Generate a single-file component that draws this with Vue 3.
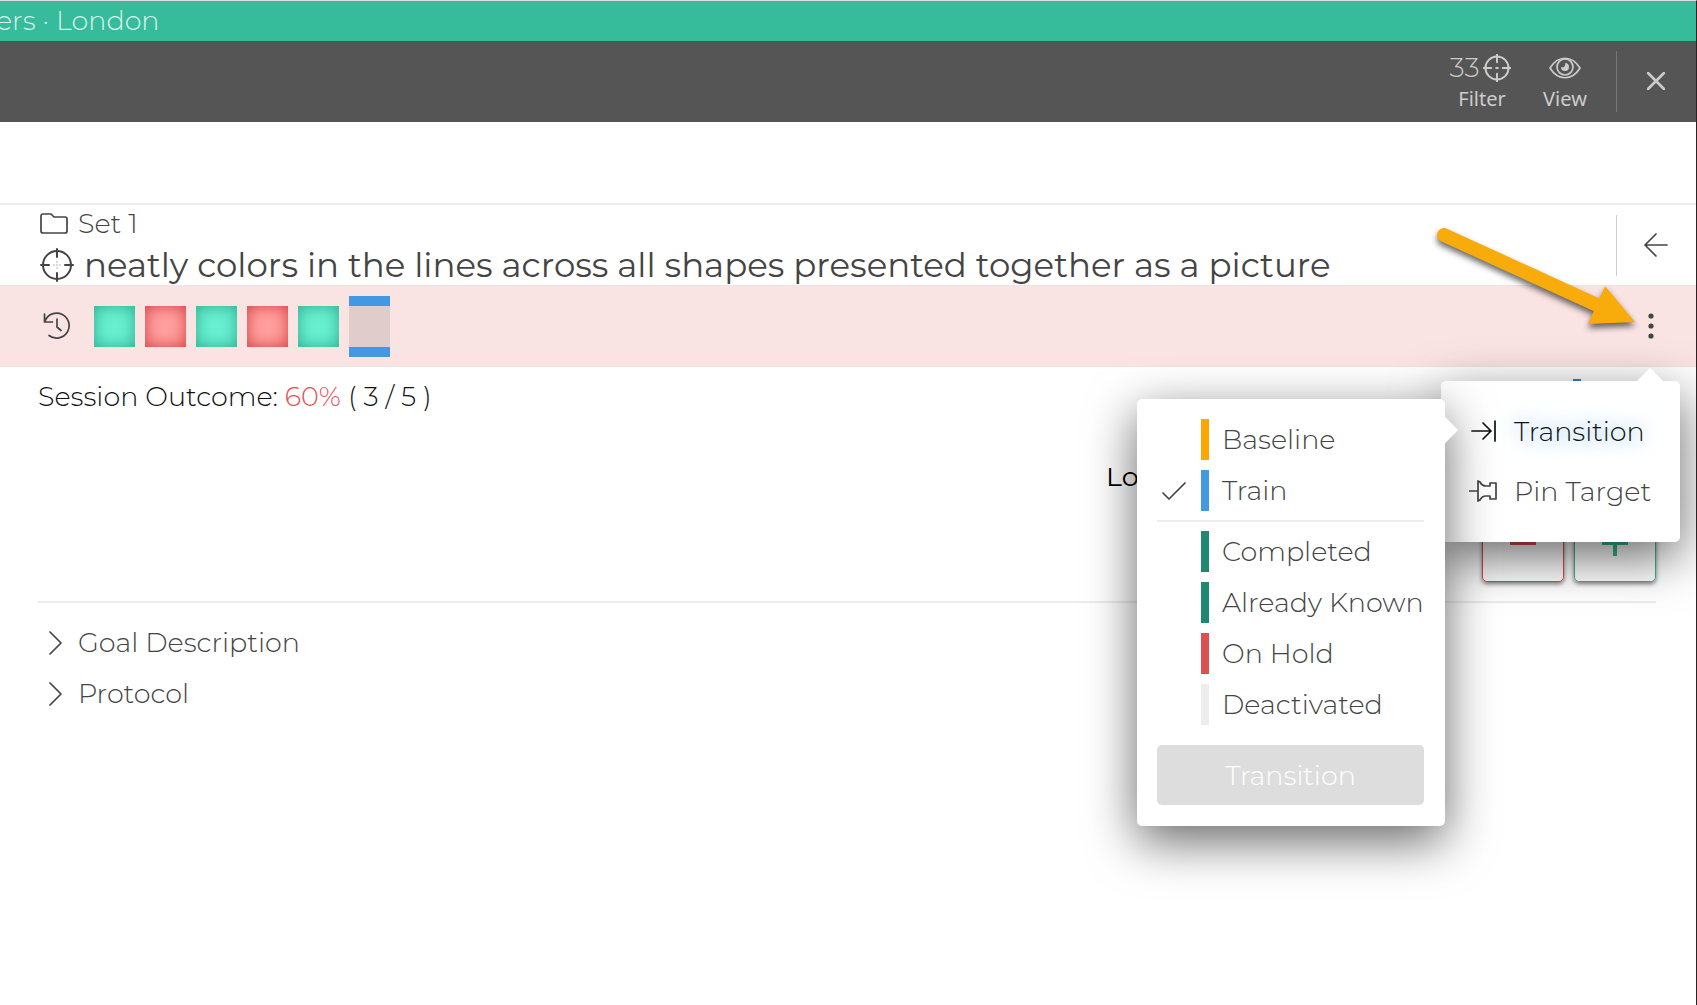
<template>
  <div class="page">
    <div class="location-bar"><span>ers · London</span></div>

    <header class="toolbar">
      <button class="tool filter">
        <span class="tool-top">
          33
          <svg class="target-small" viewBox="0 0 34 34">
            <circle cx="17" cy="17" r="14" />
            <path d="M17 1v9M17 24v9M1 17h9M24 17h9M16 17h2" />
          </svg>
        </span>
        <span class="tool-label">Filter</span>
      </button>
      <button class="tool view">
        <span class="tool-top">
          <svg class="eye" viewBox="0 0 32 22">
            <path d="M1 11C9-2 23-2 31 11C23 24 9 24 1 11Z" />
            <circle cx="16" cy="10" r="8" />
            <path class="solid" d="M16 6a4 4 0 1 1-4 4 3 3 0 0 0 4-4z" />
          </svg>
        </span>
        <span class="tool-label">View</span>
      </button>
      <div class="side-action">
        <button aria-label="Close">
          <svg class="close" viewBox="0 0 18 18"><path d="M1 1l16 16M17 1L1 17" /></svg>
        </button>
      </div>
    </header>

    <div class="spacer"></div>

    <section class="target-header">
      <div class="titles">
        <p class="set-name">
          <svg class="folder" viewBox="0 0 28 22">
            <path d="M3 1h8l3 3h11a2 2 0 0 1 2 2v12a2 2 0 0 1-2 2H3a2 2 0 0 1-2-2V3a2 2 0 0 1 2-2z" />
          </svg>
          Set 1
        </p>
        <h1>
          <svg class="target" viewBox="0 0 34 34">
            <circle cx="17" cy="17" r="14" />
            <path d="M17 1v8M17 25v8M1 17h8M25 17h8" />
            <path class="dots" d="M17 17h0M17 14h0M17 20h0M14 17h0M20 17h0" />
          </svg>
          neatly colors in the lines across all shapes presented together as a picture
        </h1>
      </div>
      <div class="side-action light">
        <button aria-label="Back">
          <svg class="back" viewBox="0 0 24 24"><path d="M23 12H1M12 1L1 12l11 11" /></svg>
        </button>
      </div>
    </section>

    <section class="history">
      <svg class="history-icon" viewBox="0 0 28 28">
        <path d="M2 9A12.500 12.500 0 1 1 6 23.500M1.500 2v8h8M14 7v8l4 3.500" />
      </svg>
      <ul class="trials">
        <li v-for="(trial, i) in trials" :key="i" :class="trial"></li>
      </ul>

      <div class="actions">
        <button class="kebab" aria-label="More actions">
          <svg viewBox="0 0 6 26">
            <circle cx="3" cy="3" r="2.600" />
            <circle cx="3" cy="13" r="2.600" />
            <circle cx="3" cy="23" r="2.600" />
          </svg>
        </button>

        <div class="popup menu">
          <button class="menu-item active">
            <svg viewBox="0 0 28 22"><path d="M3 11h19M14 3l8 8-8 8M26 1v20" /></svg>
            Transition
          </button>
          <button class="menu-item">
            <svg viewBox="0 0 28 22">
              <path d="M0 11h9M9 1v20l2-1q2-4 6-4h4v3h6V3h-6v3h-4q-4 0-6-4z" />
            </svg>
            Pin Target
          </button>

          <div class="popup submenu">
            <template v-for="(group, g) in phases" :key="g">
              <hr v-if="g > 0" />
              <button v-for="phase in group" :key="phase.name" class="phase" @click="selected = phase.name">
                <span class="check">
                  <svg v-if="selected === phase.name" viewBox="0 0 24 18"><path d="M1 11l6 6L23 1" /></svg>
                </span>
                <span class="phase-bar" :class="phase.color"></span>
                {{ phase.name }}
              </button>
            </template>
            <button class="submit" disabled>Transition</button>
          </div>
        </div>
      </div>
    </section>

    <main class="session">
      <div class="outcome">
        <p>Session Outcome: <span class="percent">60%</span> ( 3 / 5 )</p>
        <span class="marker"></span>
      </div>
      <div class="counter">
        <p class="counter-label">Lo</p>
        <div class="counter-buttons">
          <button class="minus" aria-label="Decrease">
            <svg viewBox="0 0 26 26"><path d="M0 13h26" /></svg>
          </button>
          <button class="plus" aria-label="Increase">
            <svg viewBox="0 0 26 26"><path d="M0 13h26M13 0v26" /></svg>
          </button>
        </div>
      </div>
      <hr />
      <button v-for="title in sections" :key="title" class="section-toggle">
        <svg viewBox="0 0 14 24"><path d="M1 1l11 11L1 23" /></svg>
        {{ title }}
      </button>
    </main>

    <svg class="pointer" viewBox="0 0 220 120" aria-hidden="true">
      <path class="shaft" d="M14 15L167 85" />
      <path class="head" d="M175 66L205 102L158 104z" />
    </svg>
  </div>
</template>

<script setup>
import { ref } from 'vue'

const selected = ref('Train')

const trials = ['correct', 'incorrect', 'correct', 'incorrect', 'correct', 'current']

const phases = [
  [
    { name: 'Baseline', color: 'orange' },
    { name: 'Train', color: 'blue' }
  ],
  [
    { name: 'Completed', color: 'green' },
    { name: 'Already Known', color: 'green' },
    { name: 'On Hold', color: 'red' },
    { name: 'Deactivated', color: 'gray' }
  ]
]

const sections = ['Goal Description', 'Protocol']
</script>

<style>
body {
  margin: 0;
}
</style>

<style scoped>
* {
  box-sizing: border-box;
}

.page {
  position: relative;
  min-height: 100vh;
  overflow: hidden;
  border-top: 1px solid #ddd;
  border-right: 1px solid #2b2024;
  background: white;
  color: #444;
  font-family: Montserrat, Inter, sans-serif;
  font-size: 27px;
  font-weight: 300;
}

p,
h1,
ul {
  margin: 0;
  padding: 0;
}

button {
  display: flex;
  align-items: center;
  padding: 0;
  border: none;
  background: none;
  color: inherit;
  font: inherit;
  cursor: pointer;
}

svg {
  flex: none;
  fill: none;
  stroke: currentColor;
  stroke-width: 1.7;
  stroke-linecap: round;
  stroke-linejoin: round;
}

hr {
  height: 2px;
  margin: 0;
  border: none;
  background: #ececec;
}

.location-bar {
  height: 40px;
  line-height: 40px;
  background: #36bb9b;
  color: #d7f1eb;
}

.location-bar span {
  margin-left: -4px;
}

.toolbar {
  display: flex;
  justify-content: flex-end;
  align-items: center;
  height: 81px;
  background: #555;
  color: #ccc;
}

.tool {
  flex-direction: column;
  width: 64px;
  margin-right: 19px;
}

.tool-top {
  display: flex;
  align-items: center;
  gap: 3px;
  height: 34px;
}

.filter .tool-top {
  margin-right: 4px;
}

.tool-label {
  font-family: "Noto Sans", sans-serif;
  font-size: 20px;
  font-weight: 400;
  line-height: 28px;
}

.target-small {
  width: 28px;
  height: 28px;
  stroke-width: 2.4;
}

.eye {
  width: 32px;
  height: 22px;
}

.eye .solid {
  fill: currentColor;
  stroke: none;
}

.side-action {
  display: flex;
  align-items: center;
  justify-content: center;
  flex: none;
  width: 80px;
  height: 61px;
  padding-right: 1px;
  padding-bottom: 1px;
  border-left: 1px solid #777;
}

.side-action.light {
  border-color: #ccc;
}

.close {
  width: 18px;
  height: 18px;
  stroke-width: 2.6;
}

.spacer {
  height: 83px;
  border-bottom: 2px solid #ececec;
}

.target-header {
  display: flex;
  align-items: center;
  height: 80px;
}

.titles {
  flex: 1;
  min-width: 0;
  padding-top: 3px;
  padding-left: 40px;
  white-space: nowrap;
}

.set-name {
  display: flex;
  align-items: center;
  gap: 10px;
  line-height: 36px;
}

.folder {
  width: 28px;
  height: 22px;
}

.target {
  width: 34px;
  height: 34px;
  stroke-width: 2;
}

.target .dots {
  stroke-width: 1;
}

h1 {
  display: flex;
  align-items: center;
  gap: 10px;
  font-size: 34px;
  font-weight: 400;
  line-height: 46px;
}

.back {
  width: 24px;
  height: 24px;
}

.history {
  display: flex;
  align-items: center;
  height: 82px;
  padding-left: 43px;
  border-top: 1px solid #ebe6e6;
  border-bottom: 1px solid #ebe6e6;
  background: #f9e3e3;
}

.history-icon {
  width: 28px;
  height: 28px;
}

.trials {
  display: flex;
  align-items: center;
  gap: 10px;
  margin-left: 23px;
  list-style: none;
}

.trials li {
  width: 41px;
  height: 41px;
}

.correct {
  background: #68f0d0;
  box-shadow: inset 0 0 16px #2caa8c;
}

.incorrect {
  background: #ffa09f;
  box-shadow: inset 0 0 16px #d23c3c;
}

.trials .current {
  height: 61px;
  border: solid #4299e1;
  border-width: 10px 0;
  background: #dfcccb;
}

.actions {
  position: relative;
  z-index: 2;
  margin-left: auto;
}

.kebab {
  justify-content: center;
  width: 90px;
  height: 60px;
}

.kebab svg {
  width: 6px;
  height: 26px;
  fill: currentColor;
  stroke: none;
}

.popup {
  position: absolute;
  border-radius: 5px;
  background: white;
  box-shadow: 0 15px 50px rgba(0, 0, 0, 0.6);
}

.popup::before {
  content: "";
  position: absolute;
  width: 20px;
  height: 20px;
  background: white;
  transform: rotate(45deg);
}

.menu {
  top: 85px;
  right: 16px;
  width: 239px;
  padding: 20px 28px 21px;
}

.menu::before {
  top: -9px;
  right: 20px;
}

.menu-item {
  gap: 17px;
  width: 100%;
  height: 60px;
  white-space: nowrap;
}

.menu-item svg {
  width: 28px;
  height: 22px;
}

.menu-item.active {
  color: #111;
  text-shadow: 0 0 20px #4299e1;
}

.submenu {
  top: 18px;
  right: 235px;
  width: 308px;
  padding: 20px 21px 21px 20px;
}

.submenu::before {
  top: 21px;
  right: -9px;
}

.submenu hr {
  margin: -1px 0 9px;
}

.phase {
  width: 100%;
  height: 41px;
  margin-bottom: 10px;
  white-space: nowrap;
}

.check {
  display: flex;
  width: 44px;
  padding-left: 5px;
}

.check svg {
  width: 24px;
  height: 18px;
}

.phase-bar {
  width: 8px;
  height: 41px;
  margin-right: 13px;
}

.orange {
  background: #ffa500;
}

.blue {
  background: #4299e1;
}

.green {
  background: #1f8870;
}

.red {
  background: #dd5050;
}

.gray {
  background: #ededed;
}

.submit {
  justify-content: center;
  width: 100%;
  height: 60px;
  margin-top: 20px;
  border-radius: 5px;
  background: #ddd;
  color: white;
  cursor: default;
}

.session {
  padding: 0 40px 0 38px;
}

.outcome {
  display: flex;
  justify-content: space-between;
  height: 83px;
  padding-right: 75px;
  line-height: 60px;
  color: #111;
}

.percent {
  color: #e05252;
}

.marker {
  width: 8px;
  height: 3px;
  margin-top: 12px;
  background: #3182ce;
}

.counter {
  width: 550px;
  margin-left: auto;
  padding-bottom: 19px;
}

.counter-label {
  color: #000;
  font-weight: 400;
  line-height: 54px;
}

.counter-buttons {
  display: flex;
  justify-content: flex-end;
  gap: 10px;
}

.counter-buttons button {
  justify-content: center;
  width: 82px;
  height: 78px;
  border: 1px solid currentColor;
  border-radius: 5px;
  box-shadow: 0 2px 4px rgba(0, 0, 0, 0.5);
}

.counter-buttons svg {
  width: 26px;
  height: 26px;
  stroke-width: 4;
  stroke-linecap: butt;
}

.minus {
  color: #e04848;
}

.plus {
  color: #36b795;
}

.session hr {
  margin-bottom: 14px;
}

.section-toggle {
  gap: 15px;
  height: 51px;
  padding-left: 11px;
}

.section-toggle svg {
  width: 14px;
  height: 24px;
}

.pointer {
  position: absolute;
  top: 219px;
  right: 46px;
  z-index: 3;
  width: 220px;
  height: 120px;
  color: #f7ac0c;
  filter: drop-shadow(0 4px 3px rgba(0, 0, 0, 0.6));
  pointer-events: none;
}

.shaft {
  stroke-width: 14;
}

.head {
  fill: currentColor;
  stroke: none;
}
</style>
